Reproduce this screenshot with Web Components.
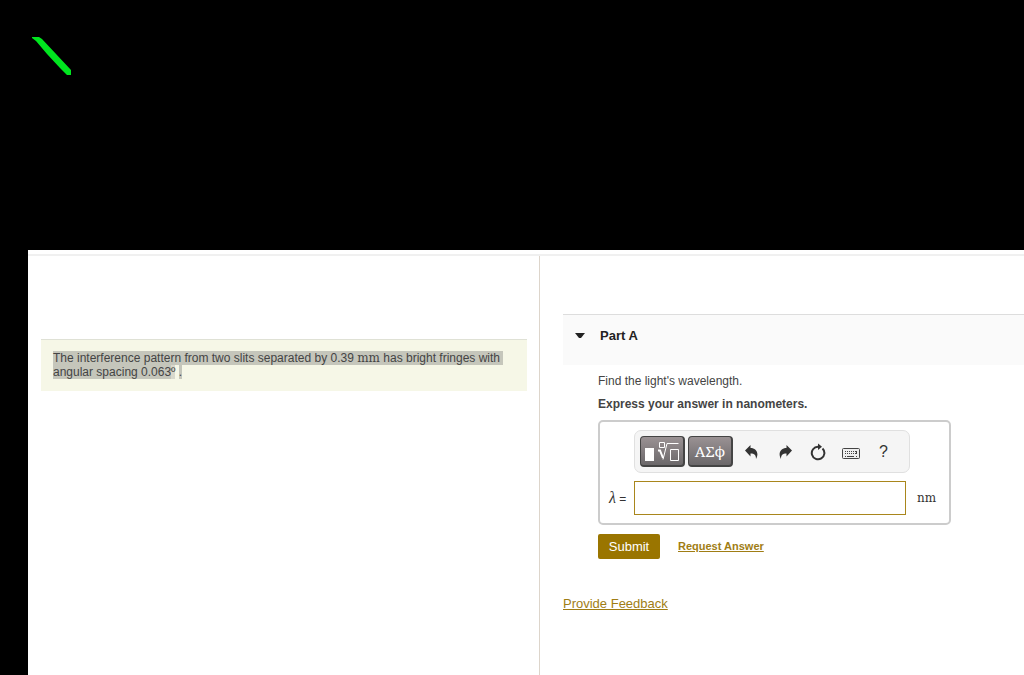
<!DOCTYPE html>
<html lang="en">
<head>
<meta charset="utf-8">
<title>Part A</title>
<style>
  html, body { margin: 0; min-height: 100%; background: #000; }
  body { font: 12px/14px "Liberation Sans", Arial, sans-serif; color: #444; }
</style>
</head>
<body>
<assignment-page>
  <problem-statement slot="problem"><mark>The interference pattern from two slits separated by 0.39</mark> <math-unit>mm</math-unit> <mark>has bright fringes with</mark><br><mark>angular spacing 0.063</mark><degree-sign></degree-sign> <mark>.</mark></problem-statement>
  <problem-part slot="part" heading="Part A">
    <p>Find the light's wavelength.</p>
    <p><strong>Express your answer in nanometers.</strong></p>
    <answer-box slot="answer" symbol="λ" unit="nm"></answer-box>
  </problem-part>
  <feedback-link slot="footer">Provide Feedback</feedback-link>
</assignment-page>

<script>
const define = (name, html, setup) => customElements.define(name, class extends HTMLElement {
  connectedCallback() {
    if (this.shadowRoot) return;
    const template = document.createElement('template');
    template.innerHTML = html.trim();
    this.attachShadow({ mode: 'open' }).append(template.content.cloneNode(true));
    if (setup) setup(this, this.shadowRoot);
  }
});

define('assignment-page', `
  <style>
    :host { display: flex; flex-direction: column; min-height: 100vh; }
    header { height: 250px; box-sizing: border-box; padding: 37px 32px; }
    header svg { display: block; }
    main { flex: 1; display: flex; flex-direction: column; margin-left: 28px; background: #fff; }
    .rule { height: 4px; border-bottom: 2px solid #f0f0f0; }
    .columns { flex: 1; display: grid; grid-template-columns: minmax(0, 512fr) minmax(0, 484fr); }
    .left { border-right: 1px solid #ddd5cb; padding: 83px 12px 24px 13px; }
    .right { padding: 58px 0 24px 23px; }
  </style>
  <header>
    <svg width="40" height="39" viewBox="0 0 40 39" aria-hidden="true"><path d="M0 0H7L10 2L39 33V38H35L28 31L15 17L4 4L0 1Z" fill="#00e51f"/></svg>
  </header>
  <main>
    <div class="rule"></div>
    <div class="columns">
      <section class="left"><slot name="problem"></slot></section>
      <section class="right"><slot name="part"></slot><slot name="footer"></slot></section>
    </div>
  </main>`);

define('problem-statement', `
  <style>
    :host { display: block; border-top: 1px solid #dfe1d5; background: #f6f7e7; padding: 11px 12px 12px 12px; color: #444; }
    ::slotted(mark) { background: #c5c6bb; color: inherit; box-shadow: 3px 0 #c5c6bb; }
    ::slotted(mark:last-child) { box-shadow: none; }
  </style>
  <slot></slot>`);

define('math-unit', `
  <style>
    :host { font: 12px/12px "DejaVu Serif", "Liberation Serif", serif; background: #c5c6bb; box-shadow: 3px 0 #c5c6bb; }
  </style><slot></slot>`);

define('degree-sign', `
  <style>
    :host { background: #d8d9cd; }
  </style>º`);

define('problem-part', `
  <style>
    :host { display: block; }
    .bar { display: flex; align-items: center; box-sizing: border-box; height: 51px; padding: 0 12px 8px; border-top: 1px solid #ddd; background: #fafafa; }
    button { display: flex; align-items: center; gap: 15px; margin: 0; padding: 0; border: 0; background: none; font: bold 13px/16px "Liberation Sans", Arial, sans-serif; color: #222; }
    .body { padding: 8px 24px 0 35px; }
    ::slotted(p) { margin: 0 0 7px; line-height: 16px; }
  </style>
  <div class="bar"><button type="button" aria-expanded="true">
    <svg width="10" height="6" viewBox="0 0 10 6" aria-hidden="true"><path d="M0 0H10L6 5H4Z" fill="#222"/></svg>
    <span></span></button></div>
  <div class="body"><slot></slot><slot name="answer"></slot></div>`,
  (host, root) => { root.querySelector('span').textContent = host.getAttribute('heading'); });

define('math-toolbar', `
  <style>
    :host { display: flex; align-items: center; box-sizing: border-box; width: 276px; height: 43px; padding: 0 5px; border: 1px solid #e0e0e0; border-radius: 7px; background: #f5f5f5; }
    button { display: flex; align-items: center; justify-content: center; box-sizing: border-box; width: 33px; height: 31px; margin: 0; padding: 0; border: 0; background: none; color: #333; font: 16px/20px "Liberation Sans", Arial, sans-serif; }
    .dark { width: 45px; margin-right: 3px; border: 1px solid #444; border-bottom-width: 2px; border-right-width: 2px; border-radius: 4px; background: linear-gradient(#9a9294, #6b686a); color: #fff; font: 15px/20px "Noto Serif", "Liberation Serif", serif; }
    .last { margin-right: 2px; }
  </style>
  <button type="button" class="dark" aria-label="Templates">
    <svg width="36" height="24" viewBox="0 0 36 24" fill="none" stroke="#fff"><path d="M1 9H10V22H1Z" fill="#fff" stroke="none"/><path d="M15.500 3.500H20.500V8.500H15.500Z"/><path d="M14 11.500H16L19 19" stroke-width="2"/><path d="M19 20.500L23 4.500H34.500"/><path d="M26.500 10.500H34.500V21.500H26.500Z"/></svg>
  </button>
  <button type="button" class="dark last">ΑΣϕ</button>
  <button type="button" aria-label="Undo"><svg width="14" height="14" viewBox="0 0 14 14"><path d="M5.500 0V3C11 3 14.500 8 11 14C11 10 9.500 8.500 5.500 8.500V11.500L0 5.500Z" fill="#333"/></svg></button>
  <button type="button" aria-label="Redo"><svg width="14" height="14" viewBox="0 0 14 14"><path d="M8.500 0V3C3 3 -.5 8 3 14C3 10 4.500 8.500 8.500 8.500V11.500L14 5.500Z" fill="#333"/></svg></button>
  <button type="button" aria-label="Reset"><svg width="16" height="18" viewBox="0 0 16 18"><path d="M12.500 5.500A6.300 6.300 0 1 1 8 3.700" fill="none" stroke="#333" stroke-width="2"/><path d="M8 .5L12 3.800L8 7Z" fill="#333"/></svg></button>
  <button type="button" aria-label="Keyboard shortcuts"><svg width="18" height="14" viewBox="0 0 18 14"><rect x=".5" y="3.500" width="17" height="10" rx="1" fill="#eee" stroke="#444"/><path d="M3 6.500H15M3 8.500H15" stroke="#444" stroke-dasharray="1 1"/><path d="M14.500 6V9M3 11.500H4M5 11.500H12M14 11.500H15" stroke="#444"/></svg></button>
  <button type="button" aria-label="Help">?</button>`);

define('answer-box', `
  <style>
    :host { display: block; }
    form { margin: 8px 0 0; }
    .frame { display: grid; grid-template-columns: 26px 272px auto; row-gap: 8px; align-items: center; box-sizing: border-box; width: 353px; height: 105px; padding: 8px; border: 2px solid #ccc; border-radius: 5px; background: #fff; }
    math-toolbar { grid-column: 2 / 4; }
    label { padding-left: 1px; white-space: nowrap; color: #333; }
    label i { font: italic 16px/16px "Liberation Serif", serif; }
    input { box-sizing: border-box; width: 100%; height: 34px; margin: 0; padding: 0 8px; border: 1px solid #a9861c; background: #fff; outline: 0; font: 14px/16px "Liberation Sans", Arial, sans-serif; }
    .unit { padding-left: 11px; font: 12px/16px "DejaVu Serif", "Liberation Serif", serif; color: #333; }
    .actions { display: flex; align-items: center; gap: 18px; margin-top: 9px; }
    .actions button { width: 62px; height: 25px; margin: 0; padding: 0; border: 0; border-radius: 2px; background: #9a7500; color: #fff; font: 13px/16px "Liberation Sans", Arial, sans-serif; }
    a { margin-bottom: 2px; font: bold 11px/14px "Liberation Sans", Arial, sans-serif; color: #a07d14; }
  </style>
  <form>
    <div class="frame">
      <math-toolbar></math-toolbar>
      <label for="answer"><i></i> =</label>
      <input id="answer" type="text" autocomplete="off">
      <span class="unit"></span>
    </div>
    <div class="actions"><button type="button">Submit</button><a href="#answer">Request Answer</a></div>
  </form>`,
  (host, root) => {
    root.querySelector('i').textContent = host.getAttribute('symbol');
    root.querySelector('.unit').textContent = host.getAttribute('unit');
  });

define('feedback-link', `
  <style>
    :host { display: block; margin-top: 37px; font-size: 13px; line-height: 16px; }
    a { color: #a07d14; }
  </style>
  <a href="#feedback"><slot></slot></a>`);
</script>
</body>
</html>
